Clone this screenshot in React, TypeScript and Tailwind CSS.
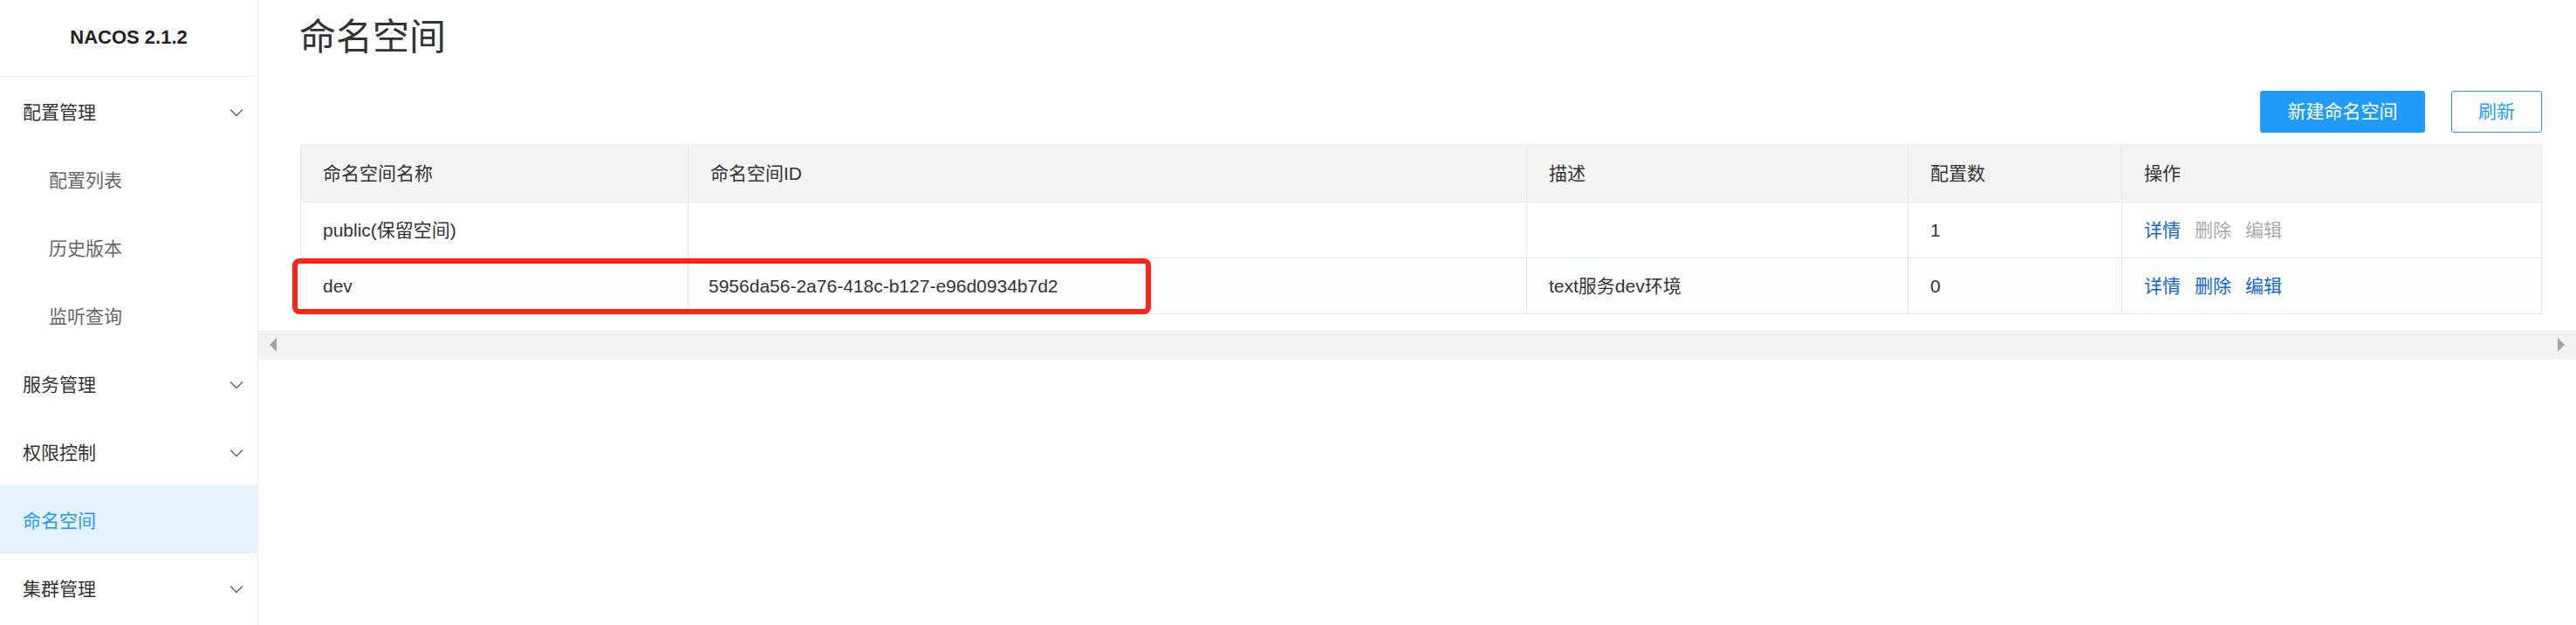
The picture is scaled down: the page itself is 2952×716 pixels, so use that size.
import React from "react";

const menu = [
  { label: "配置管理", sub: false, arrow: true },
  { label: "配置列表", sub: true },
  { label: "历史版本", sub: true },
  { label: "监听查询", sub: true },
  { label: "服务管理", sub: false, arrow: true },
  { label: "权限控制", sub: false, arrow: true },
  { label: "命名空间", sub: false, active: true },
  { label: "集群管理", sub: false, arrow: true },
];

const rows = [
  { name: "public(保留空间)", id: "", desc: "", count: "1", locked: true },
  { name: "dev", id: "5956da56-2a76-418c-b127-e96d0934b7d2", desc: "text服务dev环境", count: "0", locked: false },
];

const Chevron = () => (
  <svg width="16" height="10" viewBox="0 0 16 10" fill="none">
    <path d="M1 1.5 L8 8.5 L15 1.5" stroke="#666" strokeWidth="1.5" />
  </svg>
);

const App = () => {
  return (
    <div className="flex h-[716px] w-[2952px] bg-white font-['Liberation_Sans','Noto_Sans_CJK_SC',sans-serif] text-[#333] overflow-hidden">
      {/* sidebar */}
      <aside className="w-[296px] shrink-0 border-r border-[#eee] flex flex-col">
        <div className="h-[88px] border-b border-[#eee] flex items-center justify-center pb-[2px]">
          <span className="text-[22px] font-bold text-[#222]">NACOS 2.1.2</span>
        </div>
        <ul>
          {menu.map((m) => (
            <li
              key={m.label}
              className={`h-[78px] flex items-center justify-between pr-[16px] pt-[3px] text-[21px] ${
                m.sub ? "pl-[56px] text-[#666]" : "pl-[26px]"
              } ${m.active ? "bg-[#e3f2fe] text-[#209bfa]" : ""}`}
            >
              <span>{m.label}</span>
              {m.arrow && <Chevron />}
            </li>
          ))}
        </ul>
      </aside>

      {/* main */}
      <main className="flex-1 min-w-0 flex flex-col">
        <div className="h-[87px] pl-[47px] flex items-center pb-[2px]">
          <h1 className="text-[42px] leading-none font-normal text-[#333]">命名空间</h1>
        </div>

        <div className="flex justify-end gap-[30px] pr-[39px] pt-[17px]">
          <button className="w-[189px] h-[48px] rounded-[3px] bg-[#209bfa] text-white text-[21px]">
            新建命名空间
          </button>
          <button className="w-[104px] h-[48px] rounded-[3px] border border-[#209bfa] text-[#209bfa] text-[21px] bg-white">
            刷新
          </button>
        </div>

        <div className="relative mt-[14px] ml-[48px] mr-[39px]">
          <table className="w-full table-fixed border-collapse border border-[#e6e6e6] text-[21px]">
            <colgroup>
              <col className="w-[444px]" />
              <col className="w-[961px]" />
              <col className="w-[437px]" />
              <col className="w-[245px]" />
              <col />
            </colgroup>
            <thead>
              <tr className="h-[65px] bg-[#f4f4f4]">
                {["命名空间名称", "命名空间ID", "描述", "配置数", "操作"].map((h) => (
                  <th key={h} className="border border-[#e6e6e6] pl-[25px] text-left font-normal">
                    {h}
                  </th>
                ))}
              </tr>
            </thead>
            <tbody>
              {rows.map((r, i) => (
                <tr key={r.name} className={i === 1 ? "h-[64px] bg-[#fcfdfd]" : "h-[64px]"}>
                  <td className="border border-[#e6e6e6] pl-[25px]">{r.name}</td>
                  <td className="border border-[#e6e6e6] pl-[23px]">{r.id}</td>
                  <td className="border border-[#e6e6e6] pl-[25px]">{r.desc}</td>
                  <td className="border border-[#e6e6e6] pl-[25px]">{r.count}</td>
                  <td className="border border-[#e6e6e6] pl-[25px]">
                    <span className="text-[#1166d6] mr-[16px]">详情</span>
                    <span className={`${r.locked ? "text-[#aaa]" : "text-[#1166d6]"} mr-[16px]`}>删除</span>
                    <span className={r.locked ? "text-[#aaa]" : "text-[#1166d6]"}>编辑</span>
                  </td>
                </tr>
              ))}
            </tbody>
          </table>
          {/* red annotation box */}
          <div className="absolute left-[-9px] top-[130px] w-[984px] h-[64px] border-[6px] border-[#ff2418] rounded-[8px] pointer-events-none" />
        </div>

        {/* horizontal scrollbar */}
        <div className="mt-[18px] h-[34px] bg-[#f1f1f1] flex items-center justify-between px-[13px]">
          <svg width="8" height="16" viewBox="0 0 8 16">
            <polygon points="8,0 0,8 8,16" fill="#a3a3a3" />
          </svg>
          <svg width="8" height="16" viewBox="0 0 8 16">
            <polygon points="0,0 8,8 0,16" fill="#a3a3a3" />
          </svg>
        </div>
      </main>
    </div>
  );
};

export default App;
